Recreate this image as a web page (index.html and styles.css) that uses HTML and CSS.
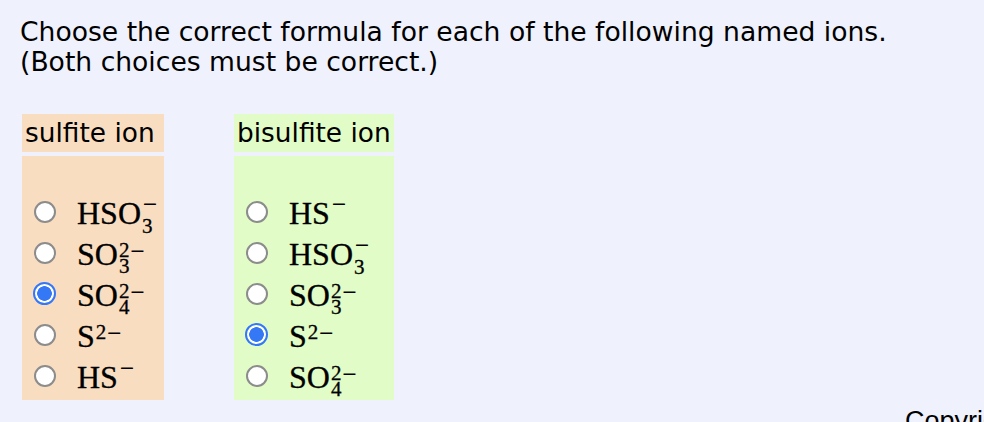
FILE: index.html
```html
<!DOCTYPE html>
<html lang="en">
<head>
<meta charset="utf-8">
<title>Named ions</title>
<link rel="stylesheet" href="styles.css">
</head>
<body>
<div class="page">
  <p class="prompt">Choose the correct formula for each of the following named ions.<br>(Both choices must be correct.)</p>
  <div class="cols">
    <div class="col col1">
      <div class="head peach">sulfite ion</div>
      <div class="opts peach">
        <label class="row"><input type="radio" name="a"><span class="f">HSO<span class="st lone"><span class="sp"><span class="m">&minus;</span></span><span class="sb">3</span></span></span></label>
        <label class="row"><input type="radio" name="a"><span class="f">SO<span class="st"><span class="sp">2<span class="m">&minus;</span></span><span class="sb">3</span></span></span></label>
        <label class="row"><input type="radio" name="a" checked><span class="f">SO<span class="st"><span class="sp">2<span class="m">&minus;</span></span><span class="sb">4</span></span></span></label>
        <label class="row"><input type="radio" name="a"><span class="f">S<span class="st"><span class="sp">2<span class="m">&minus;</span></span></span></span></label>
        <label class="row"><input type="radio" name="a"><span class="f">HS<span class="st lone"><span class="sp"><span class="m">&minus;</span></span></span></span></label>
      </div>
    </div>
    <div class="col col2">
      <div class="head green">bisulfite ion</div>
      <div class="opts green">
        <label class="row"><input type="radio" name="b"><span class="f">HS<span class="st lone"><span class="sp"><span class="m">&minus;</span></span></span></span></label>
        <label class="row"><input type="radio" name="b"><span class="f">HSO<span class="st lone"><span class="sp"><span class="m">&minus;</span></span><span class="sb">3</span></span></span></label>
        <label class="row"><input type="radio" name="b"><span class="f">SO<span class="st"><span class="sp">2<span class="m">&minus;</span></span><span class="sb">3</span></span></span></label>
        <label class="row"><input type="radio" name="b" checked><span class="f">S<span class="st"><span class="sp">2<span class="m">&minus;</span></span></span></span></label>
        <label class="row"><input type="radio" name="b"><span class="f">SO<span class="st"><span class="sp">2<span class="m">&minus;</span></span><span class="sb">4</span></span></span></label>
      </div>
    </div>
  </div>
  <div class="foot">Copyright</div>
</div>
</body>
</html>
```
FILE: styles.css
```css
html {
  overflow: hidden;
  background: #eff1fd;
}
body {
  margin: 0;
  background: #eff1fd;
  color: #000;
  font-family: "DejaVu Sans", Verdana, sans-serif;
}
.page {
  padding: 17px 0 0 20px;
}
.prompt {
  margin: 0;
  font-size: 26.6px;
  line-height: 30px;
}
.cols {
  display: flex;
  gap: 70px;
  margin: 37px 0 0 2px;
}
.col {
  display: flex;
  flex-direction: column;
  gap: 4px;
}
.col1 { width: 142px; }
.col2 { width: 160px; }
.peach { background: #f9ddc1; }
.green { background: #e1fcc6; }
.head {
  height: 38px;
  line-height: 38px;
  font-size: 26.4px;
  padding-left: 3px;
  white-space: nowrap;
}
.opts {
  padding: 38px 0 1px 12px;
}
.row {
  display: flex;
  align-items: flex-start;
  height: 41px;
}
.row input {
  appearance: none;
  -webkit-appearance: none;
  margin: 7px 0 0 0;
  width: 22px;
  height: 22px;
  border-radius: 50%;
  border: 2px solid #8c8c8c;
  background: #fff;
  box-sizing: border-box;
  flex: none;
}
.row input:checked {
  width: 23px;
  height: 23px;
  margin-top: 6px;
  margin-left: -1px;
  border: 2px solid #3478f6;
  background: radial-gradient(circle, #3478f6 0 7px, #fff 7.6px);
}
.f {
  margin: -1px 0 0 21px;
  font-family: "Liberation Serif", "Times New Roman", serif;
  font-size: 32px;
  line-height: 41px;
  white-space: nowrap;
  -webkit-text-stroke: 0.3px #000;
}
.st {
  display: inline-flex;
  flex-direction: column;
  align-items: flex-start;
  vertical-align: 8px;
  font-size: 21px;
  margin-left: 1px;
}
.st.lone {
  vertical-align: 14px;
}
.sp, .sb {
  line-height: 14px;
}
.sb {
  margin-top: 2px;
}
.st.lone .sb {
  margin-top: 9px;
}
.m {
  font-family: "DejaVu Serif", serif;
  font-size: 19px;
  -webkit-text-stroke: 0;
}
.foot {
  margin-top: 6px;
  padding-left: 885px;
  font-family: "Liberation Sans", Arial, sans-serif;
  font-size: 27px;
  line-height: 30px;
  white-space: nowrap;
}
```
